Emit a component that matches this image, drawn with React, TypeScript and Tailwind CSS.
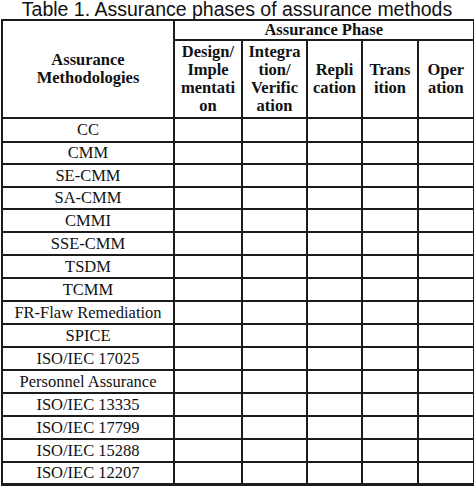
const methods = [
  'CC',
  'CMM',
  'SE-CMM',
  'SA-CMM',
  'CMMI',
  'SSE-CMM',
  'TSDM',
  'TCMM',
  'FR-Flaw Remediation',
  'SPICE',
  'ISO/IEC 17025',
  'Personnel Assurance',
  'ISO/IEC 13335',
  'ISO/IEC 17799',
  'ISO/IEC 15288',
  'ISO/IEC 12207',
];

const rowHeights = ['h-[24px]', 'h-[22px]', 'h-[23px]', 'h-[22px]', 'h-[23px]', 'h-[23px]', 'h-[23px]', 'h-[23px]', 'h-[23px]', 'h-[23px]', 'h-[23px]', 'h-[23px]', 'h-[23px]', 'h-[23px]', 'h-[23px]', 'h-[22px]'];

const phases = [
  ['Design/', 'Imple', 'mentati', 'on'],
  ['Integra', 'tion/', 'Verific', 'ation'],
  ['Repli', 'cation'],
  ['Trans', 'ition'],
  ['Oper', 'ation'],
];

const cell = 'border-2 border-[#1c1c1c] p-0 text-center align-middle';

export default function App() {
  return (
    <div className="w-[474px] h-[486px] overflow-hidden bg-white">
      <h1 className="h-[19px] text-center text-[19.5px] leading-[19px] text-[#111] font-['Liberation_Sans',Arial,sans-serif]">
        Table 1. Assurance phases of assurance methods
      </h1>
      <table className="ml-[1px] w-[472px] table-fixed border-collapse border-r-[3px] border-b-[3px] border-[#1c1c1c] text-[16.5px] text-[#111] font-['Liberation_Serif','Times_New_Roman',serif]">
        <colgroup>
          <col className="w-[172px]" />
          <col className="w-[68px]" />
          <col className="w-[65px]" />
          <col className="w-[55px]" />
          <col className="w-[56px]" />
          <col className="w-[56px]" />
        </colgroup>
        <thead className="font-bold leading-[18px]">
          <tr className="h-[20px]">
            <th rowSpan={2} className={cell}>
              Assurance
              <br />
              Methodologies
            </th>
            <th colSpan={5} className={cell}>
              Assurance Phase
            </th>
          </tr>
          <tr className="h-[78px]">
            {phases.map((lines) => (
              <th key={lines.join('')} className={cell}>
                {lines.map((l, i) => (
                  <span key={i}>
                    {l}
                    {i < lines.length - 1 && <br />}
                  </span>
                ))}
              </th>
            ))}
          </tr>
        </thead>
        <tbody className="leading-[18px]">
          {methods.map((m, i) => (
            <tr key={m} className={rowHeights[i]}>
              <td className={cell}>{m}</td>
              <td className={cell}></td>
              <td className={cell}></td>
              <td className={cell}></td>
              <td className={cell}></td>
              <td className={cell}></td>
            </tr>
          ))}
        </tbody>
      </table>
    </div>
  );
}
